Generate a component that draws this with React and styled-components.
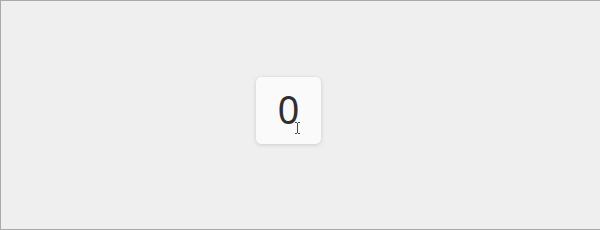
import styled, { createGlobalStyle } from "styled-components";

const GlobalStyle = createGlobalStyle`
  html, body {
    margin: 0;
    padding: 0;
    background: #efefef;
  }
`

const Frame = styled.div`
  box-sizing: border-box;
  width: 600px;
  height: 230px;
  border: 1px solid #a9a9a9;
  border-right: none;
  background: #efefef;
  display: flex;
  align-items: flex-start;
  justify-content: flex-start;
  padding: 76px 0 0 255px;
`

const Card = styled.div`
  position: relative;
  box-sizing: border-box;
  width: 65px;
  height: 67px;
  background: #fafafa;
  border-radius: 5px;
  box-shadow: 0 1px 4px rgba(0, 0, 0, 0.14), 0 0 1px rgba(0, 0, 0, 0.08);
  display: flex;
  align-items: center;
  justify-content: center;
`

const Digit = styled.span`
  font-family: "Liberation Sans", Arial, sans-serif;
  font-size: 41px;
  line-height: 1;
  color: #2f2f2f;
  transform: scaleX(0.92);
  margin-top: -1px;
`

const Cursor = styled.svg`
  position: absolute;
  left: 39px;
  top: 45px;
`

export default function App() {
  return (
    <>
      <GlobalStyle />
      <Frame>
        <Card>
          <Digit>0</Digit>
          <Cursor width="5" height="12" viewBox="0 0 5 12">
            <path d="M0 0.5h2M3 0.5h2M2.5 1v10M0 11.5h2M3 11.5h2" stroke="#444" strokeWidth="1" fill="none" />
          </Cursor>
        </Card>
      </Frame>
    </>
  )
}
